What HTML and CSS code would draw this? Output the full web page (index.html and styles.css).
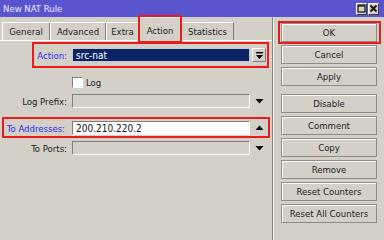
FILE: index.html
```html
<!DOCTYPE html>
<html>
<head>
<meta charset="utf-8">
<link rel="stylesheet" href="styles.css">
</head>
<body>
<div class="window">
  <div class="titlebar">
    <span class="title">New NAT Rule</span>
    <div class="wbtns">
      <span class="wbtn"><svg width="9" height="9" viewBox="0 0 9 9"><rect x="1" y="1" width="7" height="7" fill="none" stroke="#111" stroke-width="1.2"/><line x1="1" y1="2" x2="8" y2="2" stroke="#111" stroke-width="1.2"/></svg></span>
      <span class="wbtn"><svg width="9" height="9" viewBox="0 0 9 9"><path d="M1.5 1.5 L7.5 7.5 M7.5 1.5 L1.5 7.5" stroke="#111" stroke-width="1.8"/></svg></span>
    </div>
  </div>
  <div class="main">
    <div class="left">
      <div class="tabs">
        <div class="tab t-general">General</div>
        <div class="tab t-advanced">Advanced</div>
        <div class="tab t-extra">Extra</div>
        <div class="tab t-action sel">Action</div>
        <div class="tab t-stats">Statistics</div>
      </div>
      <div class="panel">
        <div class="row r-action">
          <label class="lbl blue">Action:</label>
          <div class="field sel-field">src-nat</div>
          <div class="ddbtn"><svg width="9" height="9" viewBox="0 0 9 9"><rect x="1" y="1" width="7" height="1.4" fill="#000"/><path d="M1 4 L8 4 L4.5 8 Z" fill="#000"/></svg></div>
        </div>
        <div class="row r-log">
          <span class="lbl"></span>
          <span class="check"></span><span class="chklbl">Log</span>
        </div>
        <div class="row r-prefix">
          <label class="lbl">Log Prefix:</label>
          <div class="field dis"></div>
          <div class="arrow"><svg width="9" height="6" viewBox="0 0 9 6"><path d="M0.5 1 L8.5 1 L4.5 5.5 Z" fill="#000"/></svg></div>
        </div>
        <div class="row r-addr">
          <label class="lbl blue">To Addresses:</label>
          <div class="field white">200.210.220.2</div>
          <div class="arrow"><svg width="9" height="6" viewBox="0 0 9 6"><path d="M0.5 5 L8.5 5 L4.5 0.5 Z" fill="#000"/></svg></div>
        </div>
        <div class="row r-ports">
          <label class="lbl">To Ports:</label>
          <div class="field dis"></div>
          <div class="arrow"><svg width="9" height="6" viewBox="0 0 9 6"><path d="M0.5 1 L8.5 1 L4.5 5.5 Z" fill="#000"/></svg></div>
        </div>
      </div>
    </div>
    <div class="side">
      <div class="btn">OK</div>
      <div class="btn">Cancel</div>
      <div class="btn gap">Apply</div>
      <div class="btn">Disable</div>
      <div class="btn">Comment</div>
      <div class="btn">Copy</div>
      <div class="btn">Remove</div>
      <div class="btn">Reset Counters</div>
      <div class="btn">Reset All Counters</div>
    </div>
  </div>
  <span class="mark m-tab"></span>
  <span class="mark m-action"></span>
  <span class="mark m-addr"></span>
  <span class="mark m-ok"></span>
</div>
</body>
</html>
```

FILE: styles.css
```css
* { box-sizing: border-box; }
html, body { margin: 0; padding: 0; }
body {
  background: #d4d0c8;
  font-family: "DejaVu Sans Condensed", "Liberation Sans", Arial, sans-serif;
  font-size: 9.5px;
  color: #1e1e1e;
}
.window {
  position: relative;
  width: 384px;
  height: 240px;
  background: #d4d0c8;
  overflow: hidden;
}
.titlebar {
  height: 17px;
  background: #5a55cf;
  display: flex;
  align-items: center;
  justify-content: space-between;
  padding: 0 5px 0 3px;
}
.title {
  color: #ececff;
  font-size: 9.5px;
}
.wbtns { display: flex; gap: 1px; }
.wbtn {
  width: 11px;
  height: 12px;
  background: #d4d0c8;
  border: 1px solid #404040;
  border-top-color: #fff;
  border-left-color: #fff;
  display: flex;
  align-items: center;
  justify-content: center;
}
.main {
  display: flex;
  height: 223px;
}
.left {
  width: 273px;
  border-right: 1px solid #8a8780;
  box-shadow: 1px 0 0 #f4f2ee;
  display: flex;
  flex-direction: column;
}
.tabs {
  height: 24px;
  display: flex;
  align-items: flex-end;
  padding-left: 2px;
  border-bottom: 1px solid #fff;
  position: relative;
}
.tab {
  height: 18px;
  display: flex;
  align-items: center;
  justify-content: center;
  border-top: 1px solid #fff;
  border-left: 1px solid #fff;
  border-right: 1px solid #808080;
  border-radius: 1px 1px 0 0;
  background: #d4d0c8;
  color: #1e1e1e;
}
.t-general { width: 48px; }
.t-advanced { width: 56px; }
.t-extra { width: 33px; }
.t-action { width: 42px; }
.t-stats { width: 53px; }
.tab.sel {
  height: 24px;
  margin-bottom: -1px;
  align-items: flex-start;
  padding-top: 7px;
}
.panel {
  flex: 1;
  padding-top: 7px;
  display: flex;
  flex-direction: column;
}
.row {
  display: flex;
  align-items: center;
  height: 14px;
}
.r-log { margin-top: 13px; }
.r-prefix { margin-top: 5px; }
.r-addr { margin-top: 13px; }
.r-ports { margin-top: 6px; }
.lbl {
  width: 72px;
  flex: none;
  text-align: right;
  padding-right: 5px;
  white-space: nowrap;
}
.r-addr .lbl { padding-right: 7px; }
.blue { color: #2b2bf0; }
.field {
  width: 178px;
  height: 14px;
  border: 1px solid #fff;
  border-top-color: #808080;
  border-left-color: #808080;
  padding-left: 3px;
  display: flex;
  align-items: center;
  font-size: 10px;
}
.sel-field {
  background: #0b2468;
  color: #fff;
  border-color: #c8c8d0;
}
.dis { background: #d4d0c8; }
.white { background: #fff; color: #111; }
.ddbtn {
  width: 14px;
  height: 14px;
  margin-left: 2px;
  border: 1px solid #808080;
  border-top-color: #fff;
  border-left-color: #fff;
  display: flex;
  align-items: center;
  justify-content: center;
}
.arrow {
  width: 14px;
  margin-left: 2px;
  display: flex;
  justify-content: center;
}
.check {
  width: 11px;
  height: 11px;
  background: #fff;
  border: 1px solid #fff;
  border-top-color: #808080;
  border-left-color: #808080;
  margin-right: 3px;
}
.side {
  flex: 1;
  padding: 6px 0 0 8px;
  display: flex;
  flex-direction: column;
  gap: 3px;
}
.btn {
  width: 96px;
  height: 19px;
  border: 1px solid #8e8b84;
  box-shadow: inset 1px 1px 0 #fff;
  display: flex;
  align-items: center;
  justify-content: center;
  color: #222;
}
.btn.gap { margin-bottom: 5px; }
.mark {
  position: absolute;
  border: 2px solid #ec1b1b;
  pointer-events: none;
}
.m-tab { left: 138px; top: 15px; width: 44px; height: 28px; }
.m-action { left: 32px; top: 42px; width: 237px; height: 26px; }
.m-addr { left: 2px; top: 117px; width: 268px; height: 21px; }
.m-ok { left: 278px; top: 21px; width: 103px; height: 23px; }
```
